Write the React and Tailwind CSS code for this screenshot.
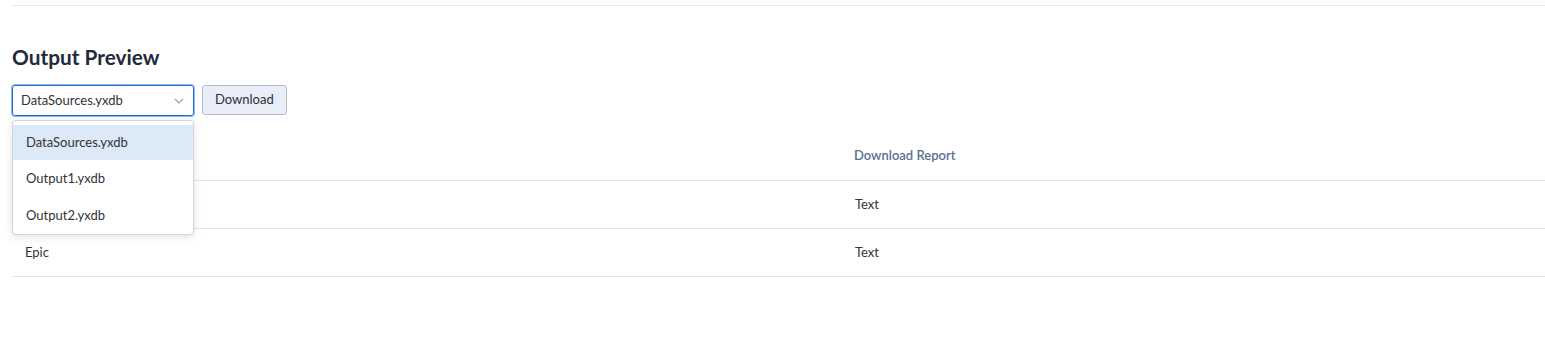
import React from "react";

export default function App() {
  const font = { fontFamily: "Lato, 'Noto Sans', sans-serif" };
  return (
    <div className="w-[1545px] h-[337px] bg-white text-[#333]" style={font}>
      <div className="pl-3 pt-[5px]">
        <div className="border-t border-[#e6e8ee]" />
        <h2 className="mt-[37px] text-[20.8px] leading-[28px] font-bold text-[#1f2a3a]">Output Preview</h2>
        <div className="mt-[14px] flex items-start gap-[8px] relative">
          <div className="relative">
            <div className="w-[182px] h-[31px] rounded-[3px] border border-[#1b6fd1] ring-1 ring-[#8fb8ea] flex items-center pl-[8px] pr-[8px] text-[13px] text-[#333]">
              <span className="flex-1">DataSources.yxdb</span>
              <svg width="10" height="6" viewBox="0 0 10 6" className="mr-[1px]">
                <path d="M1 1l4 4 4-4" fill="none" stroke="#9aa3b0" strokeWidth="1.2" />
              </svg>
            </div>
            <div className="absolute z-10 left-0 top-[35px] w-[182px] bg-white border border-[#cfd6e2] rounded-[4px] shadow-[0_2px_8px_rgba(0,0,0,0.12)] pt-[4px] pb-[1px] text-[13px] text-[#333]">
              <div className="h-[35px] flex items-center pl-[13px] bg-[#dce9f7]">DataSources.yxdb</div>
              <div className="h-[38px] flex items-center pl-[13px]">Output1.yxdb</div>
              <div className="h-[35px] flex items-center pl-[13px]">Output2.yxdb</div>
            </div>
          </div>
          <button className="h-[30px] px-[12px] rounded-[3px] border border-[#b3bccb] bg-[#e9edf7] text-[13px] text-[#2a2f3a]">Download</button>
        </div>
        <div className="mt-[16px] text-[13px]">
          <div className="h-[49px] flex items-center border-b border-[#e2e2e2]">
            <div className="w-[830px] pl-[13px]"></div>
            <div className="pl-[12px] font-semibold text-[#5b7090]">Download Report</div>
          </div>
          <div className="h-[48px] flex items-center border-b border-[#e2e2e2]">
            <div className="w-[830px] pl-[13px]"></div>
            <div className="pl-[13px]">Text</div>
          </div>
          <div className="h-[48px] flex items-center border-b border-[#e2e2e2]">
            <div className="w-[830px] pl-[13px]">Epic</div>
            <div className="pl-[13px]">Text</div>
          </div>
        </div>
      </div>
    </div>
  );
}
